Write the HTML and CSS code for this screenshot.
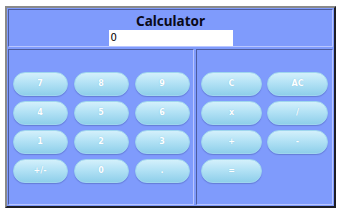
FILE: index.html
```html
<!DOCTYPE html>
<html>
<head>
<meta charset="utf-8">
<link rel="stylesheet" href="styles.css">
</head>
<body>
<div class="frame">
  <div class="cell header">
    <div class="title">Calculator</div>
    <div class="display">0</div>
  </div>
  <div class="body-row">
    <div class="cell keys">
      <div class="pad pad-num">
        <button class="key">7</button>
        <button class="key">8</button>
        <button class="key">9</button>
        <button class="key">4</button>
        <button class="key">5</button>
        <button class="key">6</button>
        <button class="key">1</button>
        <button class="key">2</button>
        <button class="key">3</button>
        <button class="key">+/-</button>
        <button class="key">0</button>
        <button class="key">.</button>
      </div>
    </div>
    <div class="cell keys">
      <div class="pad pad-op">
        <button class="key">C</button>
        <button class="key">AC</button>
        <button class="key">x</button>
        <button class="key">/</button>
        <button class="key">+</button>
        <button class="key">-</button>
        <button class="key">=</button>
      </div>
    </div>
  </div>
</div>
</body>
</html>
```

FILE: styles.css
```css
html, body {
  margin: 0;
  padding: 0;
  background: #ffffff;
}

.frame {
  margin: 6px 0 0 5px;
  width: 331px;
  height: 202px;
  box-sizing: border-box;
  border: 2px solid;
  border-color: #8a8a8a #1e1e26 #1e1e26 #8a8a8a;
  background: #7f9bfc;
  padding: 1px;
  display: grid;
  grid-template-rows: 38px 1fr;
  row-gap: 2px;
}

.cell {
  border: 1px solid;
  border-color: #4d5c9e #b9c6ff #b9c6ff #4d5c9e;
  background: #7f9bfc;
  box-sizing: border-box;
}

.header {
  display: flex;
  flex-direction: column;
  align-items: center;
  padding-top: 3px;
}

.title {
  font-family: "Noto Sans", sans-serif;
  font-weight: bold;
  font-size: 13.5px;
  line-height: 17px;
  color: #0a0a1a;
}

.display {
  width: 124px;
  height: 16px;
  background: #ffffff;
  font-family: "DejaVu Sans", sans-serif;
  font-size: 10px;
  line-height: 16px;
  padding-left: 2px;
  box-sizing: border-box;
  color: #000;
}

.body-row {
  display: grid;
  grid-template-columns: 186px 1fr;
  column-gap: 2px;
}

.keys {
  display: flex;
  align-items: center;
  justify-content: center;
}

.pad {
  display: grid;
  grid-auto-rows: 24px;
  row-gap: 5px;
}

.pad-num {
  grid-template-columns: repeat(3, 55px);
  column-gap: 6px;
}

.pad-op {
  grid-template-columns: repeat(2, 61px);
  column-gap: 5px;
}

.key {
  margin: 0;
  padding: 0;
  border: 1px solid #9fd6ee;
  border-radius: 12px;
  background: linear-gradient(to bottom, #d3f0fb 0%, #b3e2f5 45%, #8fcfea 100%);
  color: #ffffff;
  font-family: "DejaVu Sans", sans-serif;
  font-weight: bold;
  font-size: 8px;
  text-shadow: 0 0 1px #7fbfdc;
  box-shadow: 0 1px 1px rgba(60, 80, 160, 0.4);
}
```
